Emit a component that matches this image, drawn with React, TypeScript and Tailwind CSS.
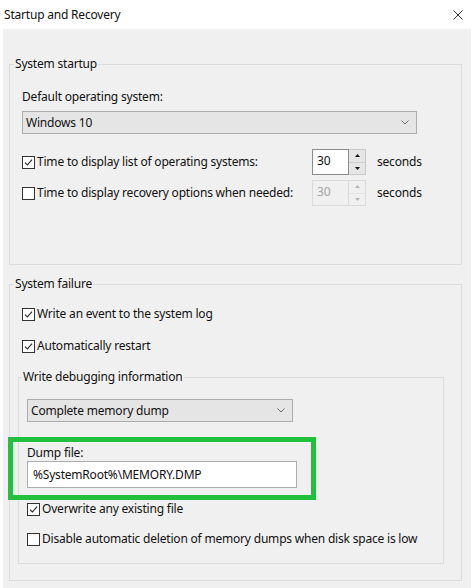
import React from "react";

const font = { fontFamily: '"Noto Sans", "Open Sans", sans-serif' };

function CheckBox({ checked }: { checked?: boolean }) {
  return (
    <span className="w-[13px] h-[13px] border border-[#333333] bg-white flex items-center justify-center shrink-0">
      {checked && (
        <svg width="9" height="9" viewBox="0 0 9 9">
          <path d="M1 4.6 L3.4 7 L8 1.6" fill="none" stroke="#222" strokeWidth="1.1" />
        </svg>
      )}
    </span>
  );
}

function CheckRow({ checked, label, className = "" }: { checked?: boolean; label: string; className?: string }) {
  return (
    <div className={`flex items-center h-[18px] ${className}`}>
      <CheckBox checked={checked} />
      <span className="ml-[2px] leading-[18px] whitespace-nowrap">{label}</span>
    </div>
  );
}

function Chevron() {
  return (
    <svg width="8" height="5" viewBox="0 0 8 5">
      <path d="M0.5 0.5 L4 4 L7.5 0.5" fill="none" stroke="#6a6a6a" strokeWidth="1" />
    </svg>
  );
}

function Dropdown({ value, className = "" }: { value: string; className?: string }) {
  return (
    <div
      className={`h-[23px] bg-[#e5e5e5] border border-[#adadad] flex items-center justify-between pl-[3px] pr-[7px] ${className}`}
    >
      <span className="leading-[18px]">{value}</span>
      <Chevron />
    </div>
  );
}

function Tri({ up, color }: { up?: boolean; color: string }) {
  return (
    <svg width="5" height="3" viewBox="0 0 5 3">
      <path d={up ? "M0 3 L2.5 0 L5 3 Z" : "M0 0 L2.5 3 L5 0 Z"} fill={color} />
    </svg>
  );
}

function Spinner({ disabled }: { disabled?: boolean }) {
  return (
    <div className="flex h-[26px]">
      <div
        className={`w-[37px] h-full border pl-[4px] pt-[2px] leading-[18px] ${
          disabled ? "bg-[#f0f0f0] border-[#dadada] text-[#a5a5a5]" : "bg-white border-[#8c8c8c] text-[#111]"
        }`}
      >
        30
      </div>
      <div
        className={`w-[17px] h-full flex flex-col border-y border-r ${
          disabled ? "border-[#dadada] bg-[#f0f0f0]" : "border-[#c8c8c8] bg-[#e6e6e6]"
        }`}
      >
        <div className={`flex-1 flex items-center justify-center border-b ${disabled ? "border-[#e2e2e2]" : "border-[#cfcfcf]"}`}>
          <Tri up color={disabled ? "#b5b5b5" : "#111"} />
        </div>
        <div className="flex-1 flex items-center justify-center">
          <Tri color={disabled ? "#b5b5b5" : "#111"} />
        </div>
      </div>
    </div>
  );
}

export default function App() {
  return (
    <div
      className="w-[474px] h-[588px] bg-white overflow-hidden text-[12px] tracking-[-0.2px] text-[#111]"
      style={font}
    >
      <div className="h-[29px] flex items-center justify-between pl-[4px] pr-[11px]">
        <span className="leading-[18px]">Startup and Recovery</span>
        <svg width="10" height="10" viewBox="0 0 10 10">
          <path d="M0.5 0.5 L9.5 9.5 M9.5 0.5 L0.5 9.5" stroke="#333" strokeWidth="1" />
        </svg>
      </div>

      <div className="mx-[3px] h-[559px] bg-[#f0f0f0] pt-[26px] px-[6px]">
        <fieldset className="w-[453px] h-[210px] border border-[#dcdcdc] px-[12px]">
          <legend className="ml-[-8px] px-[1px] leading-[18px]">System startup</legend>
          <div className="mt-[15px] leading-[18px]">Default operating system:</div>
          <Dropdown value="Windows 10" className="mt-[5px] w-[395px]" />
          <div className="mt-[15px] h-[26px] flex items-center">
            <div className="w-[290px]">
              <CheckRow checked label="Time to display list of operating systems:" />
            </div>
            <Spinner />
            <span className="ml-[11px] leading-[18px]">seconds</span>
          </div>
          <div className="mt-[5px] h-[26px] flex items-center">
            <div className="w-[290px]">
              <CheckRow label="Time to display recovery options when needed:" />
            </div>
            <Spinner disabled />
            <span className="ml-[11px] leading-[18px]">seconds</span>
          </div>
        </fieldset>

        <fieldset className="mt-[10px] w-[453px] h-[306px] border border-[#dcdcdc] px-[8px]">
          <legend className="ml-[-4px] px-[1px] leading-[18px]">System failure</legend>
          <CheckRow checked label="Write an event to the system log" className="mt-[12px] ml-[4px]" />
          <CheckRow checked label="Automatically restart" className="mt-[14px] ml-[4px]" />

          <fieldset className="mt-[13px] w-[426px] h-[196px] border border-[#dcdcdc] px-[8px]">
            <legend className="ml-[-5px] px-[1px] leading-[18px]">Write debugging information</legend>
            <Dropdown value="Complete memory dump" className="mt-[13px] w-[266px]" />
            <div className="relative mt-[23px]">
              <div className="leading-[16px]">Dump file:</div>
              <div className="w-[270px] h-[27px] bg-white border border-[#adadad] flex items-center pl-[5px]">
                <span className="leading-[18px]">%SystemRoot%\MEMORY.DMP</span>
              </div>
              <div className="absolute left-[-19px] top-[-8px] w-[308px] h-[63px] border-[5px] border-[#22c13d] pointer-events-none" />
            </div>
            <CheckRow checked label="Overwrite any existing file" className="mt-[12px]" />
            <CheckRow label="Disable automatic deletion of memory dumps when disk space is low" className="mt-[12px]" />
          </fieldset>
        </fieldset>
      </div>
    </div>
  );
}
